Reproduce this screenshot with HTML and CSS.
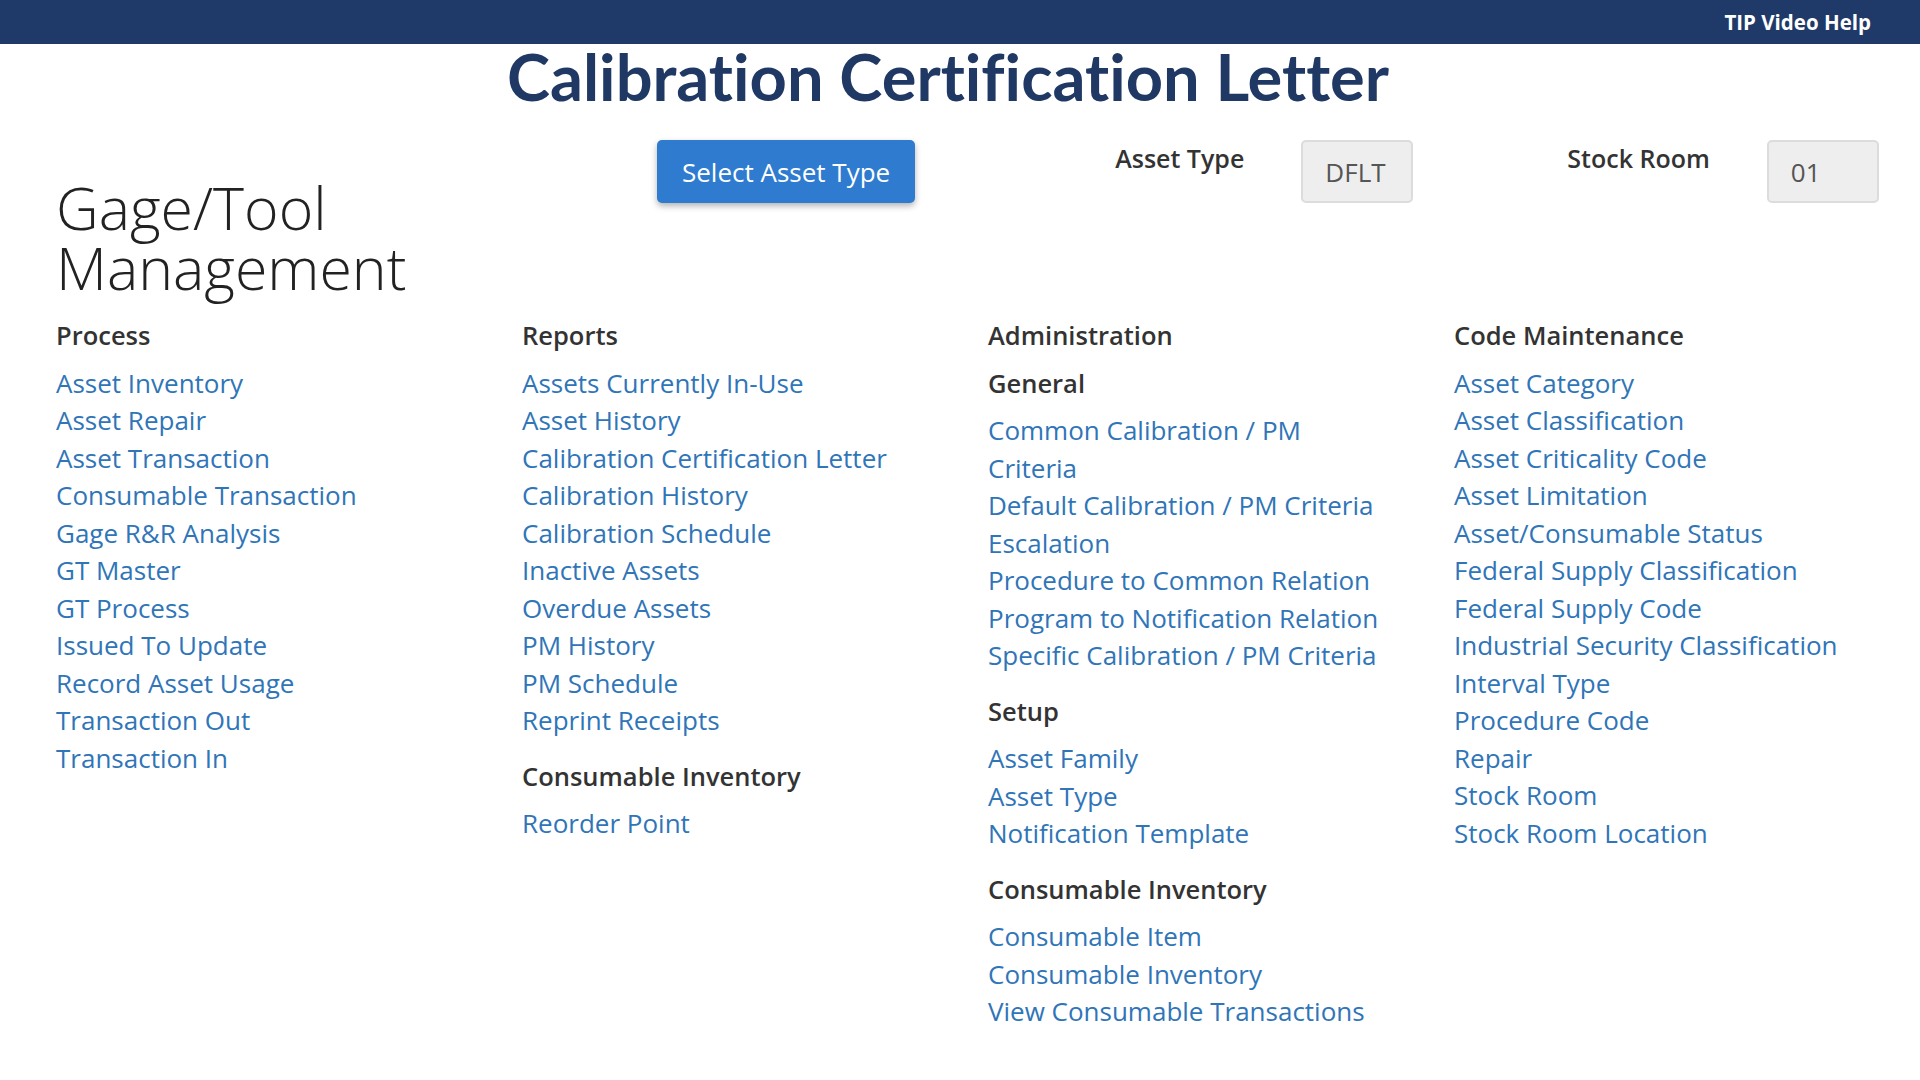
FILE: index.html
```html
<!DOCTYPE html>
<html lang="en">
<head>
    <meta charset="UTF-8">
    <meta name="viewport" content="width=device-width, initial-scale=1.0">
    <title>Calibration Certification Letter</title>
    <link rel="stylesheet" href="styles.css">
</head>
<body>
    <div class="topbar">
        <a class="help-link" href="#">TIP Video Help</a>
    </div>

    <h1 class="page-title">Calibration Certification Letter</h1>

    <div class="intro">
        <div class="intro-left">
            <h2 class="module-title">Gage/Tool Management</h2>
        </div>
        <div class="toolbar">
            <button class="btn-primary" type="button">Select Asset Type</button>
            <label class="field field-asset">
                <span class="field-label">Asset Type</span>
                <input class="field-input" type="text" value="DFLT" readonly>
            </label>
            <label class="field field-stock">
                <span class="field-label">Stock Room</span>
                <input class="field-input" type="text" value="01" readonly>
            </label>
        </div>
    </div>

    <div class="menu">
        <div class="menu-col">
            <h4 class="menu-heading">Process</h4>
            <ul class="menu-list">
                <li><a href="#">Asset Inventory</a></li>
                <li><a href="#">Asset Repair</a></li>
                <li><a href="#">Asset Transaction</a></li>
                <li><a href="#">Consumable Transaction</a></li>
                <li><a href="#">Gage R&amp;R Analysis</a></li>
                <li><a href="#">GT Master</a></li>
                <li><a href="#">GT Process</a></li>
                <li><a href="#">Issued To Update</a></li>
                <li><a href="#">Record Asset Usage</a></li>
                <li><a href="#">Transaction Out</a></li>
                <li><a href="#">Transaction In</a></li>
            </ul>
        </div>

        <div class="menu-col">
            <h4 class="menu-heading">Reports</h4>
            <ul class="menu-list">
                <li><a href="#">Assets Currently In-Use</a></li>
                <li><a href="#">Asset History</a></li>
                <li><a href="#">Calibration Certification Letter</a></li>
                <li><a href="#">Calibration History</a></li>
                <li><a href="#">Calibration Schedule</a></li>
                <li><a href="#">Inactive Assets</a></li>
                <li><a href="#">Overdue Assets</a></li>
                <li><a href="#">PM History</a></li>
                <li><a href="#">PM Schedule</a></li>
                <li><a href="#">Reprint Receipts</a></li>
            </ul>
            <h4 class="menu-heading sub">Consumable Inventory</h4>
            <ul class="menu-list">
                <li><a href="#">Reorder Point</a></li>
            </ul>
        </div>

        <div class="menu-col">
            <h4 class="menu-heading">Administration</h4>
            <h4 class="menu-heading">General</h4>
            <ul class="menu-list">
                <li><a href="#">Common Calibration / PM Criteria</a></li>
                <li><a href="#">Default Calibration / PM Criteria</a></li>
                <li><a href="#">Escalation</a></li>
                <li><a href="#">Procedure to Common Relation</a></li>
                <li><a href="#">Program to Notification Relation</a></li>
                <li><a href="#">Specific Calibration / PM Criteria</a></li>
            </ul>
            <h4 class="menu-heading sub">Setup</h4>
            <ul class="menu-list">
                <li><a href="#">Asset Family</a></li>
                <li><a href="#">Asset Type</a></li>
                <li><a href="#">Notification Template</a></li>
            </ul>
            <h4 class="menu-heading sub">Consumable Inventory</h4>
            <ul class="menu-list">
                <li><a href="#">Consumable Item</a></li>
                <li><a href="#">Consumable Inventory</a></li>
                <li><a href="#">View Consumable Transactions</a></li>
            </ul>
        </div>

        <div class="menu-col">
            <h4 class="menu-heading">Code Maintenance</h4>
            <ul class="menu-list">
                <li><a href="#">Asset Category</a></li>
                <li><a href="#">Asset Classification</a></li>
                <li><a href="#">Asset Criticality Code</a></li>
                <li><a href="#">Asset Limitation</a></li>
                <li><a href="#">Asset/Consumable Status</a></li>
                <li><a href="#">Federal Supply Classification</a></li>
                <li><a href="#">Federal Supply Code</a></li>
                <li><a href="#">Industrial Security Classification</a></li>
                <li><a href="#">Interval Type</a></li>
                <li><a href="#">Procedure Code</a></li>
                <li><a href="#">Repair</a></li>
                <li><a href="#">Stock Room</a></li>
                <li><a href="#">Stock Room Location</a></li>
            </ul>
        </div>
    </div>
</body>
</html>
```

FILE: styles.css
```css
body {
    margin: 0;
    font-family: "Open Sans", "Liberation Sans", sans-serif;
    color: #333;
    background: #fff;
}
.topbar {
    height: 44px;
    background: #1f3a69;
    display: flex;
    align-items: center;
    justify-content: flex-end;
    padding-right: 49px;
}
.help-link {
    color: #fff;
    font-weight: 700;
    font-size: 20.5px;
    text-decoration: none;
}
.page-title {
    margin: 0;
    padding-right: 24px;
    text-align: center;
    font-family: Lato, "Open Sans", sans-serif;
    font-weight: 700;
    font-size: 65px;
    line-height: 1;
    font-variant-ligatures: no-common-ligatures;
    color: #1f3864;
}
.intro {
    display: flex;
    align-items: flex-start;
    margin-top: 31px;
    padding-left: 56px;
}
.intro-left {
    width: 601px;
    flex: 0 0 auto;
}
.module-title {
    margin: 37px 0 0;
    max-width: 420px;
    font-size: 59px;
    font-weight: 300;
    line-height: 60px;
    color: #222;
}
.toolbar {
    display: flex;
    align-items: flex-start;
}
.btn-primary {
    height: 63px;
    padding: 0 25px;
    border: none;
    border-radius: 5px;
    background: #2e7bcf;
    color: #fff;
    font-family: "Open Sans", sans-serif;
    font-size: 26px;
    box-shadow: 0 3px 6px rgba(0,0,0,0.3);
    cursor: pointer;
}
.field {
    display: flex;
    align-items: flex-start;
    gap: 57px;
}
.field-asset {
    margin-left: 200px;
}
.field-stock {
    margin-left: 154px;
}
.field-label {
    margin-top: 2px;
    font-size: 25px;
    font-weight: 600;
    line-height: 32px;
    color: #333;
}
.field-input {
    box-sizing: border-box;
    width: 112px;
    height: 63px;
    padding: 0 0 0 22px;
    border: 2px solid #dcdcdc;
    border-radius: 5px;
    background: #eee;
    color: #555;
    font-family: "Open Sans", sans-serif;
    font-size: 26px;
}
.menu {
    display: grid;
    grid-template-columns: repeat(4, 1fr);
    margin-top: 20px;
    padding-left: 56px;
}
.menu-col {
    max-width: 400px;
}
.menu-heading {
    margin: 0 0 10px;
    font-size: 25.5px;
    font-weight: 600;
    line-height: 37.5px;
    color: #333;
}
.menu-heading.sub {
    margin-top: 18px;
}
.menu-list {
    list-style: none;
    margin: 0;
    padding: 0;
}
.menu-list li {
    font-size: 26px;
    line-height: 37.5px;
}
.menu-list a {
    color: #2f75b8;
    text-decoration: none;
}
.menu-list a:hover {
    text-decoration: underline;
}
```
